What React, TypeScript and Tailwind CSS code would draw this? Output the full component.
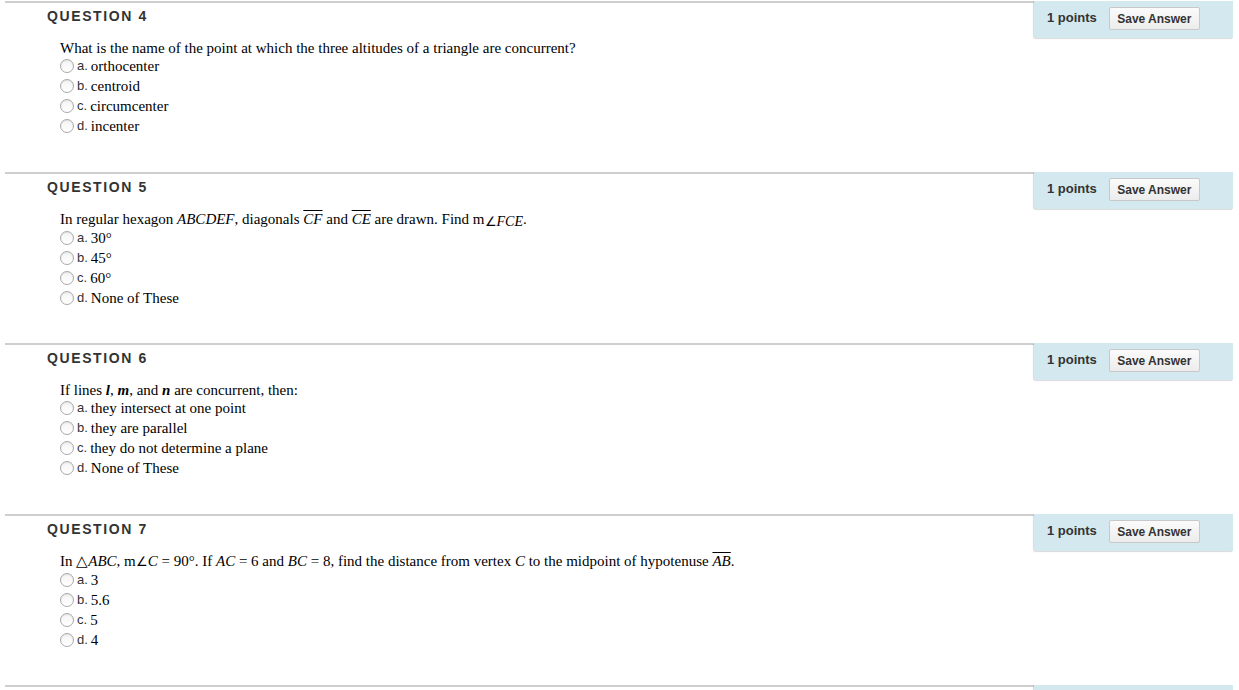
import React from "react";

type Option = { label: string; text: React.ReactNode };

type Question = {
  number: number;
  prompt: React.ReactNode;
  options: Option[];
};

const serif = "font-['Liberation_Serif','Times_New_Roman',serif]";
const sans = "font-['Liberation_Sans',Arial,sans-serif]";

const questions: Question[] = [
  {
    number: 4,
    prompt:
      "What is the name of the point at which the three altitudes of a triangle are concurrent?",
    options: [
      { label: "a.", text: "orthocenter" },
      { label: "b.", text: "centroid" },
      { label: "c.", text: "circumcenter" },
      { label: "d.", text: "incenter" },
    ],
  },
  {
    number: 5,
    prompt: (
      <>
        In regular hexagon <i>ABCDEF</i>, diagonals{" "}
        <i className="overline">CF</i> and <i className="overline">CE</i> are
        drawn. Find m
        <span className="relative top-[2px] text-[13px]">∠</span>
        <i className="relative top-[2px] text-[14px]">FCE</i>.
      </>
    ),
    options: [
      { label: "a.", text: "30°" },
      { label: "b.", text: "45°" },
      { label: "c.", text: "60°" },
      { label: "d.", text: "None of These" },
    ],
  },
  {
    number: 6,
    prompt: (
      <>
        If lines <i className="font-semibold">l</i>,{" "}
        <i className="font-semibold">m</i>, and{" "}
        <i className="font-semibold">n</i> are concurrent, then:
      </>
    ),
    options: [
      { label: "a.", text: "they intersect at one point" },
      { label: "b.", text: "they are parallel" },
      { label: "c.", text: "they do not determine a plane" },
      { label: "d.", text: "None of These" },
    ],
  },
  {
    number: 7,
    prompt: (
      <>
        In △<i>ABC</i>, m<span className="text-[13px]">∠</span>
        <i>C</i> = 90°. If <i>AC</i> = 6 and <i>BC</i> = 8, find the distance
        from vertex <i>C</i> to the midpoint of hypotenuse{" "}
        <i className="overline">AB</i>.
      </>
    ),
    options: [
      { label: "a.", text: "3" },
      { label: "b.", text: "5.6" },
      { label: "c.", text: "5" },
      { label: "d.", text: "4" },
    ],
  },
];

function Radio() {
  return (
    <span className="inline-block h-[14px] w-[14px] shrink-0 rounded-full border border-[#a9a9a9] bg-gradient-to-b from-[#f4f4f4] to-white shadow-[inset_0_1px_1px_rgba(0,0,0,0.08)]" />
  );
}

function PointsBox({ empty }: { empty?: boolean }) {
  return (
    <div className="-mt-[2px] flex h-[37px] w-[199px] items-start rounded-bl-[3px] bg-[#d4e8ef] pl-[13px] pt-[6px] shadow-[-1px_1px_1px_rgba(0,0,0,0.15)]">
      {!empty && (
        <>
          <span
            className={`${sans} text-[13px] font-bold leading-[22px] text-[#333]`}
          >
            1 points
          </span>
          <button
            type="button"
            className={`${sans} ml-[12px] h-[23px] w-[91px] rounded-[2px] border border-[#c8c8c8] bg-gradient-to-b from-[#fbfbfb] to-[#ececec] text-[12px] font-bold text-[#333]`}
          >
            Save Answer
          </button>
        </>
      )}
    </div>
  );
}

function QuestionBlock({ q }: { q: Question }) {
  return (
    <div className="ml-[5px] mr-[6px] h-[171px] shrink-0 border-t-2 border-[#cfcfcf]">
      <div className="flex items-start justify-between">
        <h3
          className={`${sans} pl-[42px] pt-[5px] text-[14px] font-bold leading-[16px] tracking-[1.6px] text-[#333]`}
        >
          QUESTION {q.number}
        </h3>
        <PointsBox />
      </div>
      <div className="pl-[55px] pt-[1px]">
        <p className={`${serif} text-[15px] leading-[18px] text-black`}>
          {q.prompt}
        </p>
        <ul className="-mt-[1px] flex flex-col">
          {q.options.map((o) => (
            <li key={o.label} className="flex h-[20px] items-center gap-[3px]">
              <Radio />
              <span className={`${sans} text-[13px] text-[#333]`}>
                {o.label}
              </span>
              <span className={`${serif} text-[15px] text-black`}>
                {o.text}
              </span>
            </li>
          ))}
        </ul>
      </div>
    </div>
  );
}

export default function App() {
  return (
    <div className="flex h-[690px] flex-col overflow-hidden bg-white pt-[1px]">
      {questions.map((q) => (
        <QuestionBlock key={q.number} q={q} />
      ))}
      <div className="ml-[5px] mr-[6px] flex shrink-0 justify-end border-t-2 border-[#cfcfcf]">
        <PointsBox empty />
      </div>
    </div>
  );
}
